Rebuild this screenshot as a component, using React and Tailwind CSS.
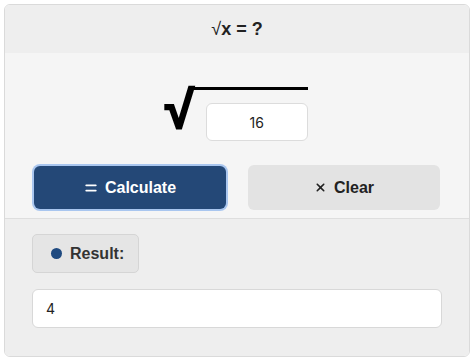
import React, { useState } from "react";
import { FaEquals, FaXmark } from "react-icons/fa6";

export default function App() {
  const [value, setValue] = useState("16");
  const [result, setResult] = useState("4");

  const calculate = () => {
    const n = parseFloat(value);
    setResult(isNaN(n) ? "" : String(Math.sqrt(n)));
  };

  return (
    <div className="w-[474px] h-[361px] bg-white p-[4px] font-['Liberation_Sans',Arial,sans-serif]">
      <div className="w-[466px] h-[353px] border border-[#dadada] rounded-[6px] overflow-hidden flex flex-col">
        {/* title */}
        <div className="h-[48px] bg-[#eeeeee] flex items-center justify-center text-[18px] font-bold text-[#222]">
          <span className="font-normal">√</span>x = ?
        </div>

        {/* input area */}
        <div className="bg-[#f5f5f5] h-[166px] border-b border-[#dedede] px-[27px] pt-[34px]">
          <div className="flex justify-center items-start pr-[1px]">
            <span className="text-[52px] leading-none font-bold text-black [-webkit-text-stroke:2px_black] mt-[-3px] mr-[0px]">√</span>
            <div className="border-t-[3px] border-black pt-[13px] pl-[12px]">
              <input
                value={value}
                onChange={(e) => setValue(e.target.value)}
                className="w-[102px] h-[38px] bg-white border border-[#dcdcdc] rounded-[6px] text-center text-[14px] text-[#222] font-['Inter',sans-serif] outline-none"
              />
            </div>
          </div>

          <div className="grid grid-cols-2 gap-[22px] mt-[25px] px-[2px]">
            <button
              onClick={calculate}
              className="h-[43px] rounded-[6px] bg-[#244877] text-white font-bold text-[16px] flex items-center justify-center gap-[7px] ring-2 ring-[#a9c6ef]"
            >
              <FaEquals className="w-[14px] h-[14px]" />
              Calculate
            </button>
            <button
              onClick={() => { setValue(""); setResult(""); }}
              className="h-[45px] mt-[-1px] rounded-[6px] bg-[#e3e3e3] text-[#222] font-bold text-[16px] flex items-center justify-center gap-[7px]"
            >
              <FaXmark className="w-[13px] h-[13px]" />
              Clear
            </button>
          </div>
        </div>

        {/* result */}
        <div className="flex-1 bg-[#eeeeee] px-[27px] pt-[15px]">
          <div className="w-[107px] h-[39px] bg-[#e5e5e5] border border-[#d5d5d5] rounded-[5px] flex items-center pl-[18px] gap-[8px]">
            <span className="w-[11px] h-[11px] rounded-full bg-[#1f4a80]" />
            <span className="text-[16px] font-bold text-[#333]">Result:</span>
          </div>
          <div className="mt-[16px] h-[39px] bg-white border border-[#d8d8d8] rounded-[6px] flex items-center px-[13px] text-[14px] text-[#222] font-['Inter',sans-serif]">
            {result}
          </div>
        </div>
      </div>
    </div>
  );
}
